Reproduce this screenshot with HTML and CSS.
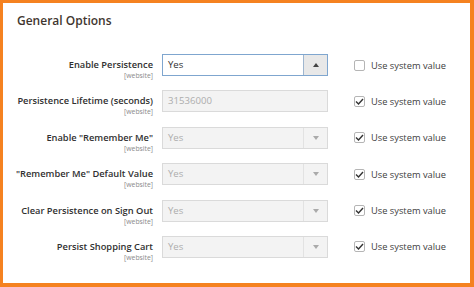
FILE: index.html
```html
<!DOCTYPE html>
<html lang="en">
<head>
    <meta charset="UTF-8">
    <title>General Options</title>
    <link rel="stylesheet" href="styles.css">
</head>
<body>
    <div class="panel">
        <h2 class="panel-title">General Options</h2>
        <div class="fields">
            <div class="field">
                <div class="field-label"><span class="label-text">Enable Persistence</span><span class="scope">[website]</span></div>
                <div class="control active">
                    <span class="control-value">Yes</span>
                    <span class="control-btn"><svg width="6" height="4" viewBox="0 0 6 4"><path d="M0 4 L3 0 L6 4 Z" fill="#444"/></svg></span>
                </div>
                <div class="system"><span class="check"></span>Use system value</div>
            </div>
            <div class="field">
                <div class="field-label"><span class="label-text">Persistence Lifetime (seconds)</span><span class="scope">[website]</span></div>
                <div class="control">
                    <span class="control-value">31536000</span>
                </div>
                <div class="system"><span class="check checked"><svg width="9" height="7" viewBox="0 0 9 7"><path d="M1 3.5 L3.5 6 L8 1" fill="none" stroke="#333" stroke-width="1.4"/></svg></span>Use system value</div>
            </div>
            <div class="field">
                <div class="field-label"><span class="label-text">Enable "Remember Me"</span><span class="scope">[website]</span></div>
                <div class="control">
                    <span class="control-value">Yes</span>
                    <span class="control-btn"><svg width="6" height="4" viewBox="0 0 6 4"><path d="M0 0 L3 4 L6 0 Z" fill="#aaa"/></svg></span>
                </div>
                <div class="system"><span class="check checked"><svg width="9" height="7" viewBox="0 0 9 7"><path d="M1 3.5 L3.5 6 L8 1" fill="none" stroke="#333" stroke-width="1.4"/></svg></span>Use system value</div>
            </div>
            <div class="field">
                <div class="field-label"><span class="label-text">"Remember Me" Default Value</span><span class="scope">[website]</span></div>
                <div class="control">
                    <span class="control-value">Yes</span>
                    <span class="control-btn"><svg width="6" height="4" viewBox="0 0 6 4"><path d="M0 0 L3 4 L6 0 Z" fill="#aaa"/></svg></span>
                </div>
                <div class="system"><span class="check checked"><svg width="9" height="7" viewBox="0 0 9 7"><path d="M1 3.5 L3.5 6 L8 1" fill="none" stroke="#333" stroke-width="1.4"/></svg></span>Use system value</div>
            </div>
            <div class="field">
                <div class="field-label"><span class="label-text">Clear Persistence on Sign Out</span><span class="scope">[website]</span></div>
                <div class="control">
                    <span class="control-value">Yes</span>
                    <span class="control-btn"><svg width="6" height="4" viewBox="0 0 6 4"><path d="M0 0 L3 4 L6 0 Z" fill="#aaa"/></svg></span>
                </div>
                <div class="system"><span class="check checked"><svg width="9" height="7" viewBox="0 0 9 7"><path d="M1 3.5 L3.5 6 L8 1" fill="none" stroke="#333" stroke-width="1.4"/></svg></span>Use system value</div>
            </div>
            <div class="field">
                <div class="field-label"><span class="label-text">Persist Shopping Cart</span><span class="scope">[website]</span></div>
                <div class="control">
                    <span class="control-value">Yes</span>
                    <span class="control-btn"><svg width="6" height="4" viewBox="0 0 6 4"><path d="M0 0 L3 4 L6 0 Z" fill="#aaa"/></svg></span>
                </div>
                <div class="system"><span class="check checked"><svg width="9" height="7" viewBox="0 0 9 7"><path d="M1 3.5 L3.5 6 L8 1" fill="none" stroke="#333" stroke-width="1.4"/></svg></span>Use system value</div>
            </div>
        </div>
    </div>
</body>
</html>
```

FILE: styles.css
```css
body {
    margin: 0;
    font-family: 'Open Sans', sans-serif;
    background: #fff;
}
.panel {
    box-sizing: border-box;
    width: 474px;
    height: 287px;
    border-style: solid;
    border-color: #f58220;
    border-width: 3px 4px 4px 3px;
    padding: 0 0 0 14px;
}
.panel-title {
    margin: 0;
    padding-top: 9px;
    font-size: 12px;
    font-weight: 600;
    line-height: 18px;
    color: #41362f;
}
.fields {
    display: flex;
    flex-direction: column;
    gap: 14.4px;
    margin-top: 24px;
}
.field {
    display: flex;
    align-items: flex-start;
    height: 22px;
}
.field-label {
    width: 136px;
    margin-right: 9px;
    padding-top: 5px;
    display: flex;
    flex-direction: column;
    align-items: flex-end;
    text-align: right;
}
.label-text {
    font-size: 9.3px;
    font-weight: 600;
    line-height: 12px;
    color: #303030;
    white-space: nowrap;
}
.scope {
    font-size: 6.8px;
    line-height: 9px;
    color: #8a8a8a;
}
.control {
    box-sizing: border-box;
    width: 166px;
    height: 22px;
    display: flex;
    border: 1px solid #dadada;
    background: #f3f3f3;
}
.control-value {
    flex: 1;
    padding-left: 5px;
    font-size: 9.6px;
    line-height: 20px;
    color: #adadad;
}
.control-btn {
    width: 23px;
    display: flex;
    align-items: center;
    justify-content: center;
    border-left: 1px solid #e2e2e2;
}
.control.active {
    border-color: #7fa6cf;
    background: #fff;
}
.control.active .control-value {
    color: #303030;
}
.control.active .control-btn {
    background: #e8e8e8;
    border-left-color: #9fb6cf;
}
.system {
    margin-left: 26px;
    height: 22px;
    display: flex;
    align-items: center;
    font-size: 9.3px;
    color: #404040;
}
.check {
    box-sizing: border-box;
    width: 11px;
    height: 11px;
    margin-right: 6px;
    border: 1px solid #b5b5b5;
    border-radius: 2px;
    background: #fff;
    display: flex;
    align-items: center;
    justify-content: center;
}
```
